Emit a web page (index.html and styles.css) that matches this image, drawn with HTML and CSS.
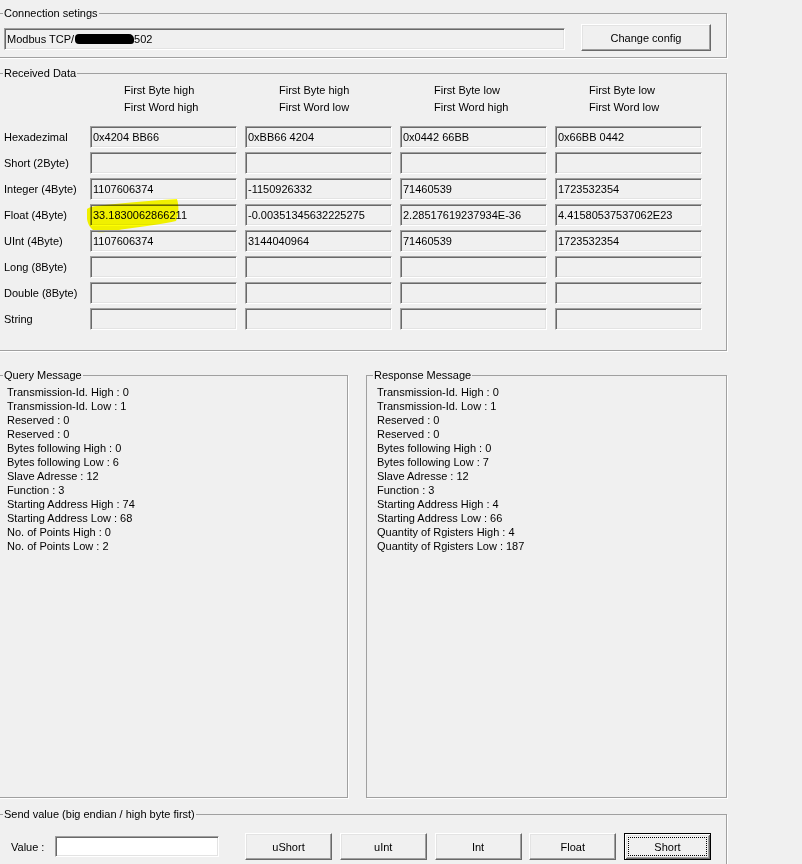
FILE: index.html
```html
<!DOCTYPE html>
<html>
<head>
<meta charset="utf-8">
<title>Modbus</title>
<link rel="stylesheet" href="styles.css">
</head>
<body>
<div class="win">
  <fieldset class="grp grp-conn">
    <legend>Connection setings</legend>
    <div class="conn-row">
      <div class="edit conn-edit">Modbus TCP/<span class="redact"></span>502</div>
      <button class="btn btn-change">Change config</button>
    </div>
  </fieldset>

  <fieldset class="grp grp-recv">
    <legend>Received Data</legend>
    <div class="recv-grid">
      <div></div>
      <div class="colhead">First Byte high<br>First Word high</div>
      <div class="colhead">First Byte high<br>First Word low</div>
      <div class="colhead">First Byte low<br>First Word high</div>
      <div class="colhead">First Byte low<br>First Word low</div>

      <div class="rlabel">Hexadezimal</div>
      <div class="edit">0x4204 BB66</div>
      <div class="edit">0xBB66 4204</div>
      <div class="edit">0x0442 66BB</div>
      <div class="edit">0x66BB 0442</div>

      <div class="rlabel">Short (2Byte)</div>
      <div class="edit"></div>
      <div class="edit"></div>
      <div class="edit"></div>
      <div class="edit"></div>

      <div class="rlabel">Integer (4Byte)</div>
      <div class="edit">1107606374</div>
      <div class="edit">-1150926332</div>
      <div class="edit">71460539</div>
      <div class="edit">1723532354</div>

      <div class="rlabel">Float (4Byte)</div>
      <div class="edit marked">33.1830062866211<svg class="hl" viewBox="0 0 100 40" width="100" height="40"><path d="M2 12 C6 9 12 9 20 8 C40 6 60 4 92 2 C94 8 94 18 91 24 C80 27 60 29 40 32 C28 34 18 36 12 35 C6 33 3 28 2 22 Z" fill="#ffff00"/></svg></div>
      <div class="edit">-0.00351345632225275</div>
      <div class="edit">2.28517619237934E-36</div>
      <div class="edit">4.41580537537062E23</div>

      <div class="rlabel">UInt (4Byte)</div>
      <div class="edit">1107606374</div>
      <div class="edit">3144040964</div>
      <div class="edit">71460539</div>
      <div class="edit">1723532354</div>

      <div class="rlabel">Long (8Byte)</div>
      <div class="edit"></div>
      <div class="edit"></div>
      <div class="edit"></div>
      <div class="edit"></div>

      <div class="rlabel">Double (8Byte)</div>
      <div class="edit"></div>
      <div class="edit"></div>
      <div class="edit"></div>
      <div class="edit"></div>

      <div class="rlabel">String</div>
      <div class="edit"></div>
      <div class="edit"></div>
      <div class="edit"></div>
      <div class="edit"></div>
    </div>
  </fieldset>

  <div class="msgs">
    <fieldset class="grp grp-query">
      <legend>Query Message</legend>
      <div class="lines">
        <div>Transmission-Id. High : 0</div>
        <div>Transmission-Id. Low : 1</div>
        <div>Reserved : 0</div>
        <div>Reserved : 0</div>
        <div>Bytes following High : 0</div>
        <div>Bytes following Low : 6</div>
        <div>Slave Adresse : 12</div>
        <div>Function : 3</div>
        <div>Starting Address High : 74</div>
        <div>Starting Address Low : 68</div>
        <div>No. of Points High : 0</div>
        <div>No. of Points Low : 2</div>
      </div>
    </fieldset>
    <fieldset class="grp grp-resp">
      <legend>Response Message</legend>
      <div class="lines">
        <div>Transmission-Id. High : 0</div>
        <div>Transmission-Id. Low : 1</div>
        <div>Reserved : 0</div>
        <div>Reserved : 0</div>
        <div>Bytes following High : 0</div>
        <div>Bytes following Low : 7</div>
        <div>Slave Adresse : 12</div>
        <div>Function : 3</div>
        <div>Starting Address High : 4</div>
        <div>Starting Address Low : 66</div>
        <div>Quantity of Rgisters High : 4</div>
        <div>Quantity of Rgisters Low : 187</div>
      </div>
    </fieldset>
  </div>

  <fieldset class="grp grp-send">
    <legend>Send value (big endian / high byte first)</legend>
    <div class="send-row">
      <span class="vlabel">Value :</span>
      <div class="edit vinput"></div>
      <div class="send-btns">
        <button class="btn">uShort</button>
        <button class="btn">uInt</button>
        <button class="btn">Int</button>
        <button class="btn">Float</button>
        <button class="btn btn-default">Short</button>
      </div>
    </div>
  </fieldset>
</div>
</body>
</html>
```

FILE: styles.css
```css
* { box-sizing: border-box; }

body {
  margin: 0;
  background: #f0f0f0;
  font-family: "Liberation Sans", Arial, sans-serif;
  font-size: 11px;
  color: #000;
}

.win {
  width: 802px;
  height: 864px;
  overflow: hidden;
}

.grp {
  margin: 0 0 0 -2px;
  padding: 0;
  border: 1px solid #a0a0a0;
  box-shadow: 1px 1px 0 #fff;
  min-width: 0;
}

.grp legend {
  padding: 0 1px;
  margin-left: 4px;
  line-height: 13px;
  font-size: 11px;
}

/* buttons */
.btn {
  font-family: inherit;
  font-size: 11px;
  color: #000;
  background: #f0f0f0;
  border: 1px solid;
  border-color: #fff #696969 #696969 #fff;
  box-shadow: inset -1px -1px 0 #a0a0a0, inset 1px 1px 0 #e3e3e3;
  padding: 0;
  width: 87px;
  height: 27px;
  flex: none;
}

.btn-default {
  border-color: #000;
  box-shadow: inset 1px 1px 0 #fff, inset -1px -1px 0 #696969, inset 2px 2px 0 #e3e3e3, inset -2px -2px 0 #a0a0a0;
  outline: 1px dotted #000;
  outline-offset: -5px;
}

/* edits */
.edit {
  position: relative;
  height: 22px;
  border: 1px solid;
  border-color: #a0a0a0 #fff #fff #a0a0a0;
  box-shadow: inset 1px 1px 0 #696969, inset -1px -1px 0 #e3e3e3;
  padding: 0 2px;
  line-height: 20px;
  white-space: nowrap;
}

.hl {
  position: absolute;
  left: -6px;
  top: -8px;
  mix-blend-mode: multiply;
  pointer-events: none;
}

/* connection */
.grp-conn {
  margin-top: 7px;
  width: 729px;
}

.conn-row {
  display: flex;
  align-items: flex-start;
  padding: 4px 0 6px 5px;
}

.conn-edit {
  width: 561px;
  margin-top: 4px;
  padding-left: 2px;
  flex: none;
}

.redact {
  display: inline-block;
  width: 59px;
  height: 10px;
  background: #000;
  border-radius: 4px 5px 3px 4px;
  vertical-align: -1px;
  margin-left: 1px;
}

.conn-row .btn-change {
  margin-left: 16px;
  width: 130px;
  height: 27px;
}

/* received data */
.grp-recv {
  margin-top: 9px;
  width: 729px;
}

.recv-grid {
  display: grid;
  grid-template-columns: 78px repeat(4, 147px);
  grid-template-rows: 40px repeat(8, 22px);
  column-gap: 8px;
  row-gap: 4px;
  padding: 2px 0 20px 5px;
}

.colhead {
  padding-left: 34px;
  line-height: 17px;
  white-space: nowrap;
}

.rlabel {
  line-height: 22px;
  white-space: nowrap;
}

/* messages */
.msgs {
  display: flex;
  gap: 18px;
  margin-top: 18px;
}

.grp-query {
  width: 350px;
  height: 429px;
}

.grp-resp {
  margin: 0;
  width: 361px;
  height: 429px;
}

.grp-resp legend {
  margin-left: 6px;
}

.lines {
  padding: 3px 0 0 8px;
  line-height: 14px;
  white-space: nowrap;
}

.grp-resp .lines {
  padding-left: 10px;
}

/* send */
.grp-send {
  margin-top: 10px;
  width: 729px;
  height: 80px;
}

.send-row {
  display: flex;
  align-items: center;
  padding: 12px 0 0 12px;
}

.vlabel {
  width: 44px;
}

.vinput {
  width: 164px;
  height: 21px;
  background: #fff;
}

.send-btns {
  display: flex;
  gap: 7.75px;
  margin-left: 26px;
}
```
